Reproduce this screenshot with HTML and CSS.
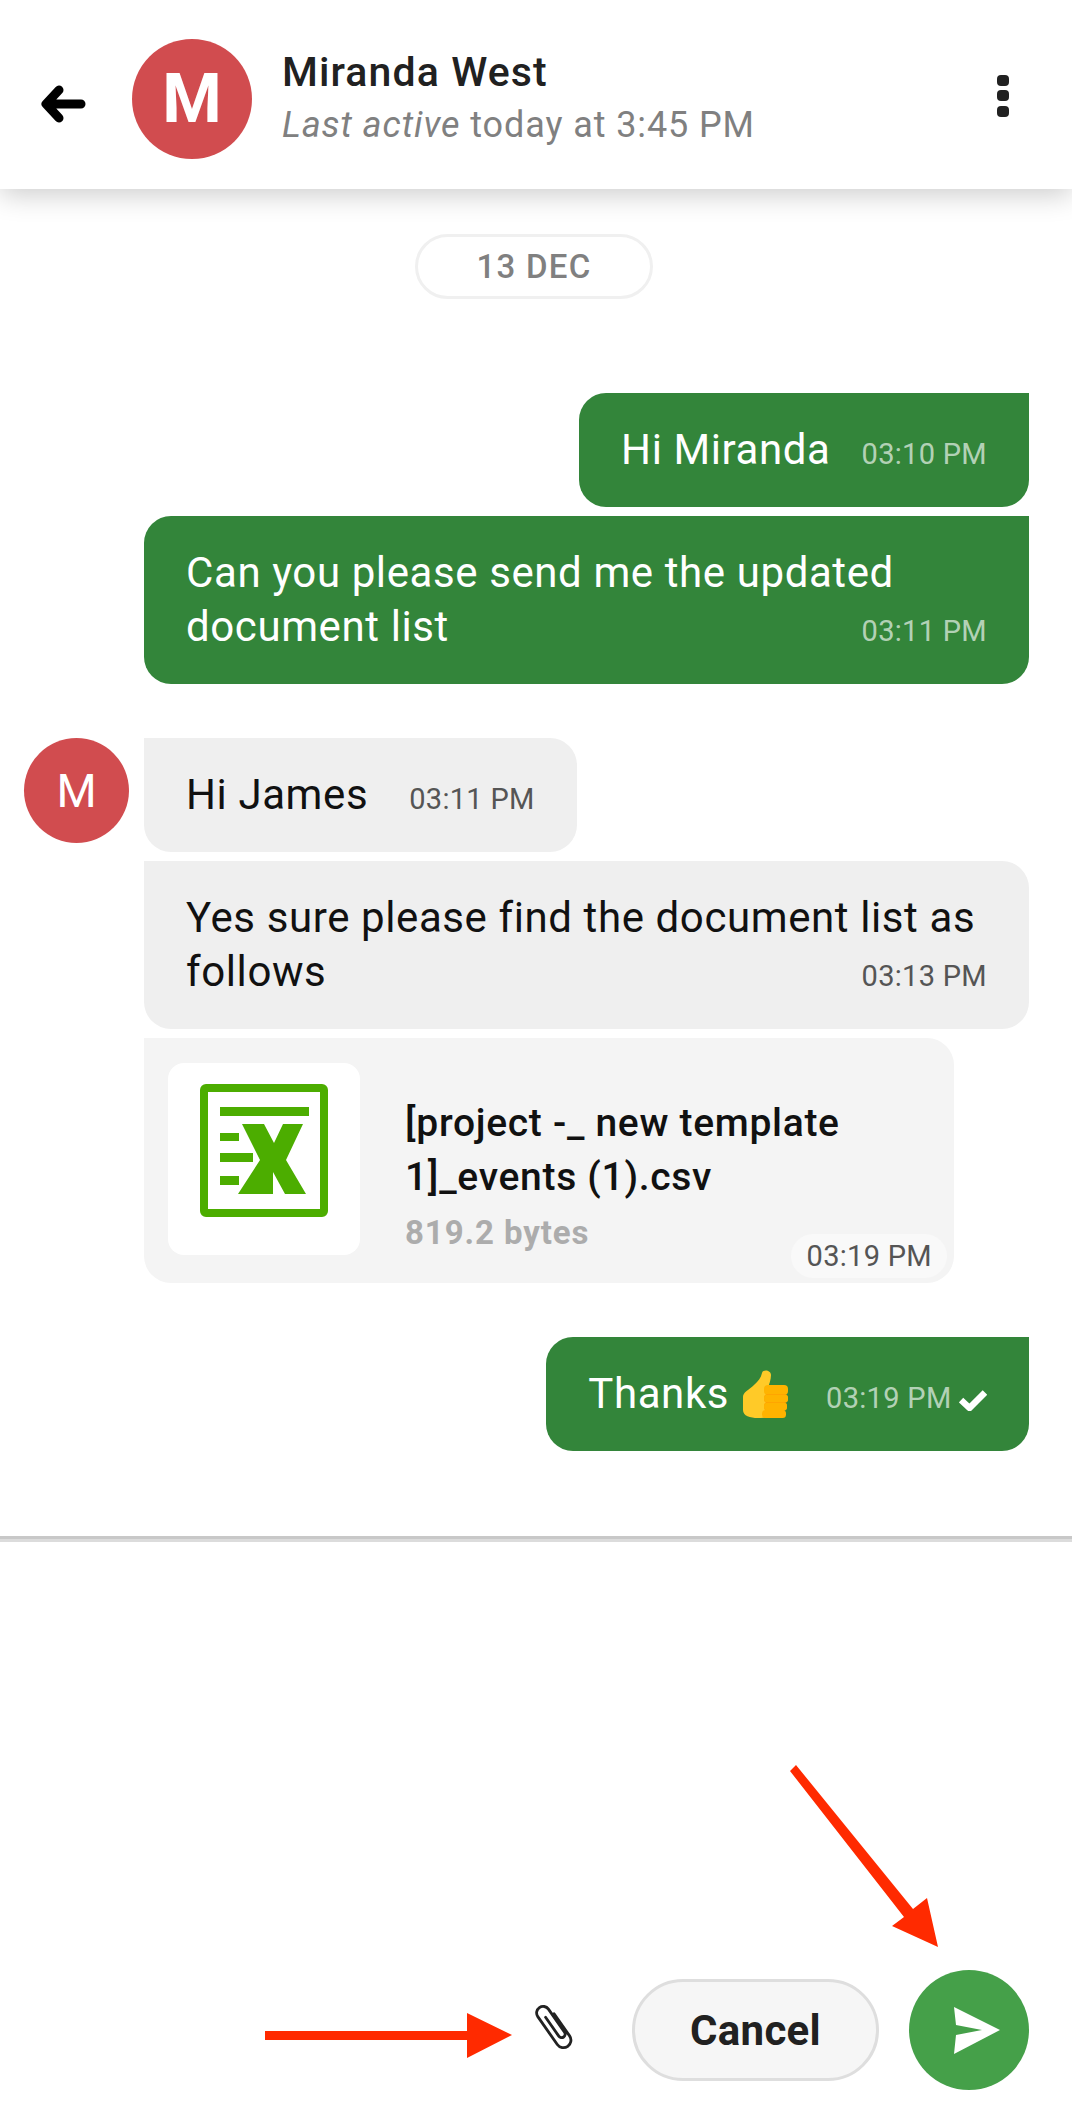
FILE: index.html
```html
<!DOCTYPE html>
<html lang="en">
<head>
    <meta charset="UTF-8">
    <meta name="viewport" content="width=device-width, initial-scale=1.0">
    <title>Chat with Miranda West</title>
    <link rel="stylesheet" href="styles.css">
</head>
<body>
    <div class="screen">
        <header class="chat-header">
            <svg class="back-icon" viewBox="0 0 46 38" width="46" height="38">
                <path d="M19 5 L6 19 L19 33 M7 19 H41" fill="none" stroke="#000" stroke-width="9" stroke-linecap="round" stroke-linejoin="round"/>
            </svg>
            <div class="avatar avatar-large">M</div>
            <div class="contact">
                <div class="contact-name">Miranda West</div>
                <div class="contact-status"><em>Last active</em> today at 3:45 PM</div>
            </div>
            <div class="kebab"><span></span><span></span><span></span></div>
        </header>

        <section class="thread">
            <div class="date-pill">13 DEC</div>

            <div class="group group-out">
                <div class="bubble bubble-out">
                    <span>Hi Miranda</span>
                    <span class="time">03:10 PM</span>
                </div>
                <div class="bubble bubble-out bubble-wide">
                    <div>Can you please send me the updated</div>
                    <div class="last-line">
                        <span>document list</span>
                        <span class="time">03:11 PM</span>
                    </div>
                </div>
            </div>

            <div class="group group-in">
                <div class="avatar avatar-small">M</div>
                <div class="group-messages">
                    <div class="bubble bubble-in">
                        <span>Hi James</span>
                        <span class="time time-loose">03:11 PM</span>
                    </div>
                    <div class="bubble bubble-in bubble-wide">
                        <div>Yes sure please find the document list as</div>
                        <div class="last-line">
                            <span>follows</span>
                            <span class="time">03:13 PM</span>
                        </div>
                    </div>
                    <div class="file-card">
                        <div class="file-thumb">
                            <svg viewBox="0 0 128 133" width="128" height="133">
                                <rect x="4" y="4" width="120" height="125" rx="2" fill="none" stroke="#4cad00" stroke-width="8"/>
                                <rect x="20" y="23" width="89" height="9" fill="#4cad00"/>
                                <rect x="20" y="49" width="19" height="8" fill="#4cad00"/>
                                <rect x="20" y="69" width="33" height="9" fill="#4cad00"/>
                                <rect x="20" y="92" width="19" height="9" fill="#4cad00"/>
                                <polygon points="42,40 64,40 74,59 83,40 103,40 86,76 106,110 85,110 73,88 73,110 38,110 60,76" fill="#4cad00"/>
                            </svg>
                        </div>
                        <div class="file-info">
                            <div class="file-name">[project -_ new template 1]_events (1).csv</div>
                            <div class="file-size">819.2 bytes</div>
                        </div>
                        <div class="file-time">03:19 PM</div>
                    </div>
                </div>
            </div>

            <div class="group group-out">
                <div class="bubble bubble-out">
                    <span class="thanks">Thanks
                        <svg class="thumb" viewBox="0 0 46 48" width="46" height="48">
                            <path d="M1 27 C1 22 7 20 12 15 C16 11 19 8 20 3 C21 -1 29 0 29 5 C29 10 27 14 26 18 L28 46 C24 48 20 48 16 48 C8 48 1 46 1 40 Z" fill="#ffca28"/>
                            <rect x="22" y="15" width="24" height="10" rx="4" fill="#ffb300"/>
                            <rect x="22" y="24" width="24" height="9" rx="4" fill="#ffa000"/>
                            <rect x="22" y="24.8" width="24" height="7.4" rx="3.5" fill="#ffb300"/>
                            <rect x="22" y="32" width="23" height="9" rx="4" fill="#ffa000"/>
                            <rect x="22" y="32.8" width="23" height="7.4" rx="3.5" fill="#ffb300"/>
                            <rect x="20" y="40" width="24" height="8" rx="3.5" fill="#ffb300"/>
                        </svg>
                    </span>
                    <span class="time">03:19 PM
                        <svg class="tick" viewBox="0 0 28 22" width="28" height="22">
                            <path d="M2 11 L10.5 19 L26 3.5" fill="none" stroke="#fff" stroke-width="6.5" stroke-linejoin="round"/>
                        </svg>
                    </span>
                </div>
            </div>
        </section>

        <footer class="composer">
            <svg class="clip-icon" viewBox="0 0 46 50" width="46" height="50">
                <g transform="rotate(-35 23 25)">
                    <path d="M31 12 V39 a7.5 7.5 0 0 1 -15 0 V5 a6.5 6.5 0 0 1 13 0 V33 a3.5 3.5 0 0 1 -7 0 V10" fill="none" stroke="#222" stroke-width="2.8" stroke-linecap="round"/>
                </g>
            </svg>
            <button class="cancel-btn">Cancel</button>
            <button class="send-btn">
                <svg viewBox="0 0 48 48" width="48" height="48">
                    <polygon points="1,1 47,24 1,48 3,29 29,24 3,19" fill="#fff"/>
                </svg>
            </button>
        </footer>

        <svg class="annotations" viewBox="0 0 1072 2118" width="1072" height="2118">
            <polygon points="265,2031 467,2031 467,2013 512,2035 467,2058 467,2040 265,2040" fill="#ff2a00"/>
            <polygon points="796,1765 790,1771 904,1917 892,1926 938,1947 927,1898 913,1909" fill="#ff2a00"/>
        </svg>
    </div>
</body>
</html>
```

FILE: styles.css
```css
body {
    margin: 0;
    font-family: Roboto, 'Liberation Sans', sans-serif;
    background: #fff;
    color: #111;
}
.screen {
    position: relative;
    width: 1072px;
    height: 2118px;
    display: flex;
    flex-direction: column;
    overflow: hidden;
}
.chat-header {
    height: 189px;
    flex: none;
    box-sizing: border-box;
    display: flex;
    align-items: center;
    padding: 9px 63px 0 40px;
    background: #fff;
    box-shadow: 0 6px 26px rgba(0, 0, 0, 0.2);
    position: relative;
}
.back-icon {
    margin: 9px 46px 0 0;
}
.avatar {
    border-radius: 50%;
    background: #d14c4f;
    color: #fff;
    display: flex;
    align-items: center;
    justify-content: center;
    flex: none;
}
.avatar-large {
    width: 120px;
    height: 120px;
    font-size: 68px;
    font-weight: 700;
}
.avatar-small {
    width: 105px;
    height: 105px;
    font-size: 46px;
}
.contact {
    margin-left: 30px;
    flex: 1;
}
.contact-name {
    font-size: 41px;
    font-weight: 500;
    line-height: 52px;
    letter-spacing: 1.1px;
    color: #212121;
}
.contact-status {
    font-size: 36px;
    line-height: 54px;
    letter-spacing: 0.9px;
    color: #808080;
}
.kebab {
    display: flex;
    flex-direction: column;
    gap: 4.5px;
    margin-bottom: 7px;
}
.kebab span {
    width: 12px;
    height: 11px;
    border-radius: 4px;
    background: #212121;
}
.thread {
    flex: none;
    height: 1350px;
    box-sizing: border-box;
    padding: 45px 43px 0 24px;
    border-bottom: 3px solid #c8c8c8;
    box-shadow: 0 3px 0 #dcdcdc;
    display: flex;
    flex-direction: column;
}
.date-pill {
    align-self: center;
    margin-left: 15px;
    width: 238px;
    height: 65px;
    box-sizing: border-box;
    border: 3px solid #f0f0f0;
    border-radius: 33px;
    display: flex;
    align-items: center;
    justify-content: center;
    font-size: 33px;
    font-weight: 500;
    letter-spacing: 1.3px;
    color: #808080;
    margin-bottom: 94px;
}
.group {
    display: flex;
    gap: 15px;
    margin-bottom: 54px;
}
.group-out {
    flex-direction: column;
    align-items: flex-end;
    gap: 9px;
}
.group-messages {
    flex: 1;
    display: flex;
    flex-direction: column;
    align-items: flex-start;
    gap: 9px;
}
.bubble {
    box-sizing: border-box;
    display: flex;
    align-items: baseline;
    gap: 31px;
    padding: 30px 42px;
    font-size: 42px;
    line-height: 54px;
    letter-spacing: 0.6px;
    border-radius: 27px;
}
.bubble-wide {
    display: block;
    width: 885px;
}
.last-line {
    display: flex;
    justify-content: space-between;
    align-items: baseline;
}
.bubble-out {
    background: #33853a;
    color: #fff;
    border-top-right-radius: 0;
}
.bubble-in {
    background: #efefef;
    border-top-left-radius: 0;
}
.time {
    font-size: 29px;
    line-height: 30px;
    letter-spacing: 0.3px;
    color: #555;
    white-space: nowrap;
}
.bubble-out .time {
    color: rgba(255, 255, 255, 0.65);
}
.time-loose {
    margin-left: 10px;
}
.file-card {
    position: relative;
    width: 810px;
    height: 245px;
    box-sizing: border-box;
    padding: 25px 24px;
    display: flex;
    gap: 45px;
    background: #f4f4f4;
    border-radius: 27px;
    border-top-left-radius: 0;
}
.file-thumb {
    width: 192px;
    height: 192px;
    flex: none;
    background: #fff;
    border-radius: 16px;
    display: flex;
    align-items: center;
    justify-content: center;
}
.file-thumb svg {
    margin-bottom: 17px;
}
.file-info {
    padding-top: 33px;
    width: 470px;
}
.file-name {
    font-size: 39px;
    font-weight: 500;
    line-height: 54px;
    letter-spacing: 0.7px;
    color: #111;
}
.file-size {
    font-size: 33px;
    font-weight: 700;
    line-height: 54px;
    letter-spacing: 0.9px;
    color: #acacac;
    margin-top: 2px;
}
.file-time {
    position: absolute;
    right: 7px;
    bottom: 5px;
    padding: 0 15px 0 16px;
    height: 44px;
    line-height: 44px;
    border-radius: 22px;
    background: #f9f9f9;
    font-size: 29px;
    letter-spacing: 0.3px;
    color: #555;
}
.thanks {
    display: flex;
    align-items: center;
    gap: 13px;
}
.thumb {
    flex: none;
    margin-right: 7px;
}
.tick {
    vertical-align: -3px;
}
.composer {
    flex: 1;
    display: flex;
    align-items: flex-end;
    justify-content: flex-end;
    padding: 0 43px 28px 0;
}
.clip-icon {
    margin: 0 54px 36px 0;
}
.cancel-btn {
    width: 247px;
    height: 102px;
    margin: 0 30px 9px 0;
    border: 3px solid #dedede;
    border-radius: 51px;
    background: #f6f6f6;
    font-family: inherit;
    font-size: 42px;
    font-weight: 700;
    letter-spacing: 0.3px;
    color: #212121;
}
.send-btn {
    width: 120px;
    height: 120px;
    border: none;
    border-radius: 50%;
    background: #45a049;
    display: flex;
    align-items: center;
    justify-content: center;
    padding: 0 0 0 15px;
}
.annotations {
    position: absolute;
    top: 0;
    left: 0;
    pointer-events: none;
}
```
